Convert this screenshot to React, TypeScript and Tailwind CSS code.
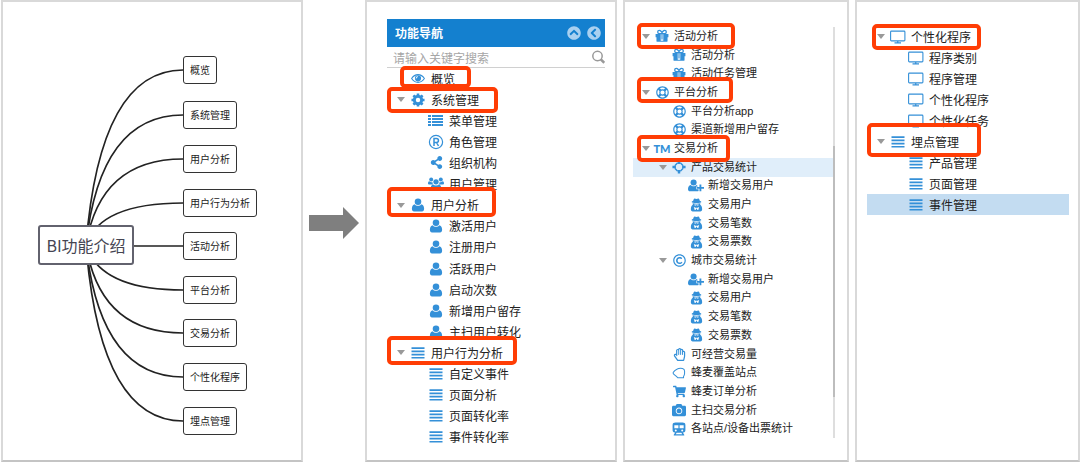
import React from 'react';
import clsx from 'clsx';
import {
  FaCamera,
  FaChevronCircleLeft,
  FaChevronCircleUp,
  FaRegCopyright,
  FaRegHandPaper,
  FaRegLifeRing,
  FaShareAlt,
  FaShoppingCart,
} from 'react-icons/fa';

interface TreeItem {
  label: string;
  icon: React.ReactNode;
  depth: 0 | 1 | 2;
  open?: boolean;
  selected?: string;
  // size and place of the marker frame drawn over the row
  mark?: string;
}

/* ---------- icons ---------- */

const EyeIcon = () => (
  <svg viewBox="0 0 28 18" className="h-[9px] w-3.5" fill="none" stroke="currentColor">
    <path d="M1.200 9C4.500 4 9 1.300 14 1.300S23.500 4 26.800 9C23.500 14 19 16.700 14 16.700S4.500 14 1.200 9z" strokeWidth="2.200" />
    <path fillRule="evenodd" fill="currentColor" stroke="none" d="M14 2.500a6.200 6.200 0 1 0 0 12.400 6.200 6.200 0 0 0 0-12.400zM14 4.300v1.700a3 3 0 0 0-3 3H9.300A4.700 4.700 0 0 1 14 4.300z" />
  </svg>
);

const GearIcon = () => (
  <svg viewBox="0 0 24 24" className="h-3.5 w-3.5" fill="none" stroke="currentColor">
    <circle cx="12" cy="12" r="6.300" strokeWidth="5" />
    <g strokeWidth="4.400">
      <path d="M12 .8v4M12 19.200v4M.8 12h4M19.200 12h4M4.100 4.100l2.800 2.800M17.100 17.100l2.800 2.800M4.100 19.900l2.800-2.800M17.100 6.900l2.800-2.800" />
    </g>
  </svg>
);

const UserIcon = () => (
  <svg viewBox="0 0 24 24" className="h-3.5 w-3.5" fill="currentColor">
    <path d="M6 10.500C2.600 11.300 1.500 15 1.500 18.500c0 2.600 1.500 4.500 3.600 4.500h13.800c2.100 0 3.600-1.900 3.600-4.500 0-3.500-1.100-7.200-4.500-8-1.600 1.700-3.600 2.600-6 2.600s-4.400-.9-6-2.600z" />
    <circle cx="12" cy="6.300" r="5.600" />
  </svg>
);

const UsersIcon = () => (
  <svg viewBox="0 0 30 26" className="h-3.5 w-4" fill="currentColor">
    <circle cx="6" cy="4.500" r="3.700" />
    <circle cx="24" cy="4.500" r="3.700" />
    <path d="M0 12.500C0 9.500 1 8 2.500 8c1 1 2.300 1.500 3.700 1.500.7 0 1.400-.1 2-.4.1 2 .7 3.600 1.800 5H3c-2 0-3-.7-3-1.600zM30 12.500C30 9.500 29 8 27.500 8c-1 1-2.300 1.500-3.700 1.500-.7 0-1.400-.1-2-.4-.1 2-.7 3.600-1.800 5h7c2 0 3-.7 3-1.600z" />
    <circle cx="15" cy="9" r="5" />
    <path d="M9.500 14C6.300 14.800 5 18 5 21.500 5 24 6.500 25.500 8.700 25.500h12.600c2.200 0 3.700-1.500 3.700-4 0-3.500-1.300-6.700-4.500-7.500-1.500 1.300-3.300 2-5.500 2s-4-.7-5.500-2z" />
  </svg>
);

const UserPlusIcon = () => (
  <svg viewBox="0 0 30 24" className="h-[13px] w-4" fill="currentColor">
    <circle cx="10.500" cy="6.500" r="5.700" />
    <path d="M5 11C1.600 11.800 0 15 0 19c0 2.400 1.500 4 3.600 4h14c.9 0 1.600-.2 2.200-.6V19H15.500v-5h2.900c-.6-1.600-1.400-2.600-2.400-3-1.500 1.600-3.300 2.500-5.500 2.500S6.500 12.600 5 11z" />
    <path d="M21.500 10H25v4.800h5v3.400h-5V23h-3.500v-4.800h-5v-3.400h5z" />
  </svg>
);

const SecretIcon = () => (
  <svg viewBox="0 0 24 26" className="h-3.5 w-[13px]" fill="currentColor">
    <path d="M8.500 1c1.200 0 2.300.7 3.500.7S14.300 1 15.500 1C17 1 18 4 18.300 5.700c1.700.4 2.700.9 2.700 1.500 0 1.200-4 2-9 2s-9-.8-9-2c0-.6 1-1.100 2.700-1.500C6 4 7 1 8.500 1z" />
    <path fillRule="evenodd" d="M4.800 9.900c2 .5 4.500.8 7.200.8s5.200-.3 7.200-.8l-.4 2.600c2.500 1.500 3.700 4.500 3.700 8.500 0 2.500-1.300 4-3.500 4H5c-2.200 0-3.500-1.500-3.500-4 0-4 1.200-7 3.700-8.500zM7.800 12l.7 1.700h2.600l.9-1 .9 1h2.600l.7-1.700zM7 16.500l1.700 6h1.500l1.800-3.300 1.800 3.300h1.500l1.700-6-3.200 1.500h-3.600z" />
  </svg>
);

const ListIcon = () => (
  <svg viewBox="0 0 16 14" className="h-3.5 w-4" fill="currentColor">
    <path d="M0 1h3v2H0zM0 4h3v2H0zM0 7h3v2H0zM0 10h3v2H0zM4 1h11v2H4zM4 4h11v2H4zM4 7h11v2H4zM4 10h11v2H4z" />
  </svg>
);

const LinesIcon = () => (
  <svg viewBox="0 0 14 14" className="h-3.5 w-3.5" fill="currentColor">
    <path d="M.5 1.300h13v1.700H.5zM.5 4.500h13v1.700H.5zM.5 7.700h13v1.700H.5zM.5 10.900h13v1.700H.5z" />
  </svg>
);

const RegisteredIcon = () => (
  <svg viewBox="0 0 16 16" className="h-4 w-4" fill="none" stroke="currentColor">
    <circle cx="8" cy="8" r="6.600" strokeWidth="1.200" />
    <path d="M6 12V4.400h2.400a2 2 0 0 1 0 4.100H6M8.500 8.500l2 3.500" strokeWidth="1.500" />
  </svg>
);

const GiftIcon = () => (
  <svg viewBox="0 0 24 24" className="h-3.5 w-3.5" fill="currentColor">
    <path d="M1 8.500h8.800V14H1zM14.200 8.500H23V14h-8.800zM2.500 14h7.300v8H4c-.9 0-1.500-.6-1.500-1.500zM14.200 14h7.300v6.500c0 .9-.6 1.500-1.500 1.500h-5.800zM11 8.500h2V18h-2zM9 20h6v2H9z" />
    <path d="M12 8H7.500C5.700 8 4.600 6.900 4.600 5.300S5.800 2.500 7.500 2.500c1.100 0 2 .5 2.800 1.400L12 6l1.700-2.100c.8-.9 1.700-1.400 2.800-1.400 1.700 0 2.900 1.200 2.900 2.800S18.300 8 16.500 8z" fill="none" stroke="currentColor" strokeWidth="2.200" />
  </svg>
);

const CrosshairIcon = () => (
  <svg viewBox="0 0 16 16" className="h-3.5 w-3.5" fill="none" stroke="currentColor">
    <path d="M3.200 6.500L6.500 3.200M9.500 3.200l3.300 3.300M12.800 9.500l-3.300 3.300M6.500 12.800L3.200 9.500" strokeWidth="1.600" />
    <path d="M8 .5v4M8 11.500v4M.5 8h4M11.500 8h4" strokeWidth="2.800" />
  </svg>
);

const FistIcon = () => (
  <svg viewBox="0 0 16 14" className="h-3 w-3.5" fill="none" stroke="currentColor" strokeWidth="1.200" strokeLinejoin="round">
    <path d="M1.200 6.500C2 5 4.500 3 6 2.300c1.500-.8 4-.9 6-.6 1.500.3 2.500 1.300 2.500 3v3c0 1.200-.5 2.300-1.200 3.300v1.500H6.500C5 10.500 3 9.500 1.800 8.200c-.5-.5-.8-1.100-.6-1.700z" />
  </svg>
);

const TrainIcon = () => (
  <svg viewBox="0 0 24 24" className="h-3.5 w-3.5" fill="currentColor">
    <path fillRule="evenodd" d="M6 1h12c3 0 5 1.500 5 4v9c0 2.400-1.900 4-4.500 4.200L21 22v1H3v-1l2.500-3.800C2.900 18 1 16.400 1 14V5c0-2.500 2-4 5-4zM4 5.500v5.200h7V5.500zM13 5.500v5.200h7V5.500zM6.500 12.800a1.700 1.700 0 1 0 0 3.400 1.700 1.700 0 0 0 0-3.400zM17.500 12.800a1.700 1.700 0 1 0 0 3.400 1.700 1.700 0 0 0 0-3.400zM8 18.500l-1.500 2.500h11L16 18.500z" />
  </svg>
);

const MonitorIcon = () => (
  <svg viewBox="0 0 16 14" className="h-3.5 w-4 shrink-0" fill="none" stroke="currentColor">
    <rect x="0.600" y="1.100" width="14.300" height="9.800" rx="0.800" strokeWidth="1.100" />
    <path d="M7.750 11v2M4.500 12.900h6.500" strokeWidth="1.200" />
  </svg>
);

const TmIcon = () => <span className="font-['Lato'] text-[11px] font-black leading-none">TM</span>;

/* ---------- tree ---------- */

const indents = {
  normal: ['pl-2.5', 'pl-7', 'pl-[46px]'],
  compact: ['pl-[9px]', 'pl-[26px]', 'pl-[43px]'],
};

function Tree({ items, compact, rowClass }: { items: TreeItem[]; compact?: boolean; rowClass: string }) {
  const indent = compact ? indents.compact : indents.normal;

  return (
    <ul className="flex min-w-0 flex-1 flex-col">
      {items.map((item, i) => (
        <li
          key={i}
          className={clsx(
            'relative flex items-center whitespace-nowrap leading-none text-[#222]',
            compact ? 'gap-1 text-[11px]' : 'gap-[5px] text-xs',
            rowClass,
            indent[item.depth],
            item.selected
          )}
        >
          <span className="flex w-2 justify-center">
            {item.open && <span className="border-x-4 border-t-[5px] border-x-transparent border-t-[#999]" />}
          </span>
          <span className="flex w-4 justify-center text-[13px] text-[#3490d8]">{item.icon}</span>
          <span>{item.label}</span>
          {item.mark && (
            <span className={clsx('absolute z-10 rounded-[5px] border-4 border-[#ff3d05]', item.mark)} />
          )}
        </li>
      ))}
    </ul>
  );
}

const navItems: TreeItem[] = [
  { label: '概览', icon: <EyeIcon />, depth: 0, mark: '-top-0.5 left-[13px] h-[22px] w-[71px]' },
  { label: '系统管理', icon: <GearIcon />, depth: 0, open: true, mark: '-top-0.5 left-0 h-[26px] w-[111px]' },
  { label: '菜单管理', icon: <ListIcon />, depth: 1 },
  { label: '角色管理', icon: <RegisteredIcon />, depth: 1 },
  { label: '组织机构', icon: <FaShareAlt />, depth: 1 },
  { label: '用户管理', icon: <UsersIcon />, depth: 1 },
  { label: '用户分析', icon: <UserIcon />, depth: 0, open: true, mark: '-top-2 left-0 h-[30px] w-[109px]' },
  { label: '激活用户', icon: <UserIcon />, depth: 1 },
  { label: '注册用户', icon: <UserIcon />, depth: 1 },
  { label: '活跃用户', icon: <UserIcon />, depth: 1 },
  { label: '启动次数', icon: <UserIcon />, depth: 1 },
  { label: '新增用户留存', icon: <UserIcon />, depth: 1 },
  { label: '主扫用户转化', icon: <UserIcon />, depth: 1 },
  { label: '用户行为分析', icon: <LinesIcon />, depth: 0, open: true, mark: '-top-1.5 left-0 h-[29px] w-[130px]' },
  { label: '自定义事件', icon: <LinesIcon />, depth: 1 },
  { label: '页面分析', icon: <LinesIcon />, depth: 1 },
  { label: '页面转化率', icon: <LinesIcon />, depth: 1 },
  { label: '事件转化率', icon: <LinesIcon />, depth: 1 },
];

const analysisItems: TreeItem[] = [
  { label: '活动分析', icon: <GiftIcon />, depth: 0, open: true, mark: '-top-1 left-1 h-[26px] w-[98px]' },
  { label: '活动分析', icon: <GiftIcon />, depth: 1 },
  { label: '活动任务管理', icon: <GiftIcon />, depth: 1 },
  { label: '平台分析', icon: <FaRegLifeRing />, depth: 0, open: true, mark: '-top-1.5 left-1 h-[26px] w-24' },
  { label: '平台分析app', icon: <FaRegLifeRing />, depth: 1 },
  { label: '渠道新增用户留存', icon: <FaRegLifeRing />, depth: 1 },
  { label: '交易分析', icon: <TmIcon />, depth: 0, open: true, mark: '-top-1 left-1 h-[27px] w-[93px]' },
  { label: '产品交易统计', icon: <CrosshairIcon />, depth: 1, open: true, selected: 'bg-[#e0eefa]' },
  { label: '新增交易用户', icon: <UserPlusIcon />, depth: 2 },
  { label: '交易用户', icon: <SecretIcon />, depth: 2 },
  { label: '交易笔数', icon: <SecretIcon />, depth: 2 },
  { label: '交易票数', icon: <SecretIcon />, depth: 2 },
  { label: '城市交易统计', icon: <FaRegCopyright />, depth: 1, open: true },
  { label: '新增交易用户', icon: <UserPlusIcon />, depth: 2 },
  { label: '交易用户', icon: <SecretIcon />, depth: 2 },
  { label: '交易笔数', icon: <SecretIcon />, depth: 2 },
  { label: '交易票数', icon: <SecretIcon />, depth: 2 },
  { label: '可经营交易量', icon: <FaRegHandPaper />, depth: 1 },
  { label: '蜂麦覆盖站点', icon: <FistIcon />, depth: 1 },
  { label: '蜂麦订单分析', icon: <FaShoppingCart />, depth: 1 },
  { label: '主扫交易分析', icon: <FaCamera className="h-3.5 w-3.5" />, depth: 1 },
  { label: '各站点/设备出票统计', icon: <TrainIcon />, depth: 1 },
];

const programItems: TreeItem[] = [
  { label: '个性化程序', icon: <MonitorIcon />, depth: 0, open: true, mark: '-top-0.5 left-[5px] h-[26px] w-[109px]' },
  { label: '程序类别', icon: <MonitorIcon />, depth: 1 },
  { label: '程序管理', icon: <MonitorIcon />, depth: 1 },
  { label: '个性化程序', icon: <MonitorIcon />, depth: 1 },
  { label: '个性化任务', icon: <MonitorIcon />, depth: 1 },
  { label: '埋点管理', icon: <LinesIcon />, depth: 0, open: true, mark: '-top-2 left-0 h-[34px] w-[114px]' },
  { label: '产品管理', icon: <LinesIcon />, depth: 1 },
  { label: '页面管理', icon: <LinesIcon />, depth: 1 },
  { label: '事件管理', icon: <LinesIcon />, depth: 1, selected: 'bg-[#c3dcf1]' },
];

/* ---------- mind map ---------- */

const root = { x: 83, y: 242 };
const nodeLeft = 180;

const nodes = [
  { label: '概览', y: 67 },
  { label: '系统管理', y: 112 },
  { label: '用户分析', y: 156 },
  { label: '用户行为分析', y: 200 },
  { label: '活动分析', y: 243 },
  { label: '平台分析', y: 287 },
  { label: '交易分析', y: 330 },
  { label: '个性化程序', y: 374 },
  { label: '埋点管理', y: 418 },
];

function MindMap() {
  return (
    <div className="relative h-full">
      <svg className="absolute inset-0 h-full w-full" fill="none" stroke="#222" strokeWidth="1.700">
        {nodes.map((n) => (
          <path key={n.label} d={`M${root.x} ${root.y}Q${root.x + 14} ${n.y} ${nodeLeft} ${n.y}`} />
        ))}
      </svg>
      <div
        className="absolute flex h-10 w-24 -translate-x-1/2 -translate-y-1/2 items-center justify-center whitespace-nowrap rounded-[3px] border-2 border-[#62626e] bg-white text-base leading-none text-[#454552]"
        style={{ left: root.x, top: root.y }}
      >
        BI功能介绍
      </div>
      {nodes.map((n) => (
        <div
          key={n.label}
          className="absolute flex h-7 -translate-y-1/2 items-center whitespace-nowrap rounded-[3px] border border-[#333] bg-white px-1.5 text-[10px] leading-none text-[#222]"
          style={{ left: nodeLeft, top: n.y }}
        >
          {n.label}
        </div>
      ))}
    </div>
  );
}

function Panel({ className, children }: { className?: string; children: React.ReactNode }) {
  return (
    <section className={clsx('min-w-0 border-2 border-[#d9d9d9] border-b-[#c4c4c4] bg-white', className)}>
      {children}
    </section>
  );
}

export default function App() {
  return (
    <main className="grid min-h-screen grid-cols-[302fr_50fr_252fr_226fr_225fr] gap-1.5 bg-white pl-px font-['Noto_Sans_CJK_SC',sans-serif]">
      <Panel className="pt-px">
        <MindMap />
      </Panel>

      <svg viewBox="0 0 50 32" className="mt-[207px] w-full self-start" fill="#7f7f7f">
        <path d="M0 8h34V0l16 16-16 16v-8H0z" />
      </svg>

      <Panel className="flex flex-col pb-3 pl-5 pr-2.5 pt-[17px]">
        <header className="flex h-7 items-center justify-between bg-[#1480cf] pl-2 pr-1 text-white">
          <h1 className="text-xs font-bold leading-none">功能导航</h1>
          <div className="flex gap-1.5 text-sm text-[#a9d0f0]">
            <button type="button" aria-label="收起">
              <FaChevronCircleUp />
            </button>
            <button type="button" aria-label="折叠">
              <FaChevronCircleLeft />
            </button>
          </div>
        </header>
        <label className="flex h-[21px] items-center border-b border-[#d0d0d0] pl-1.5">
          <input
            type="text"
            placeholder="请输入关键字搜索"
            aria-label="搜索"
            className="h-5 min-w-0 flex-1 text-xs outline-none placeholder:text-[#a6a6a6]"
          />
          <svg viewBox="0 0 14 14" className="h-3.5 w-3.5" fill="none" stroke="#999">
            <circle cx="6.500" cy="6" r="4.700" strokeWidth="1.500" />
            <path d="M9.800 9.300l3.500 3.500" strokeWidth="2.600" />
          </svg>
        </label>
        <Tree items={navItems} rowClass="flex-1" />
      </Panel>

      <Panel className="flex pb-[22px] pl-2 pr-3 pt-[25px] font-['Liberation_Sans','Noto_Sans_CJK_SC',sans-serif]">
        <Tree items={analysisItems} compact rowClass="flex-1" />
        <div className="relative w-0.5 bg-[#dedede]">
          <div className="absolute inset-x-0 top-[29%] h-[61%] bg-[#bdbdbd]" />
        </div>
      </Panel>

      <Panel className="pb-6 pl-2.5 pr-[9px] pt-6">
        <Tree items={programItems} rowClass="h-[21px]" />
      </Panel>
    </main>
  );
}
